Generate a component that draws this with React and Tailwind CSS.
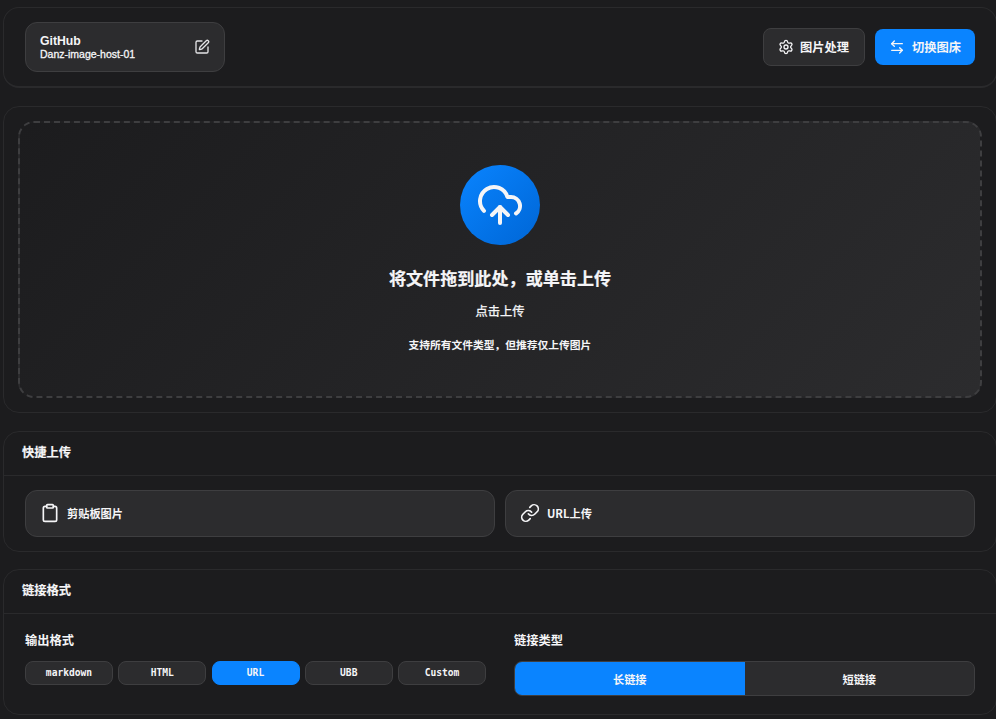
import { ArrowLeftRight, Clipboard, CloudUpload, Link, Settings, SquarePen } from "lucide-react";

const formats = ["markdown", "HTML", "URL", "UBB", "Custom"];

function Card({ className, children }) {
  return (
    <section className={`rounded-[16px] border border-[#2a2a2c] bg-[#1c1c1e] ${className}`}>{children}</section>
  );
}

function CardTitle({ children }) {
  return (
    <h2 className="flex h-[44px] items-center border-b border-[#2a2a2c] px-[18px] text-[12.25px] font-bold [-webkit-text-stroke:0.2px]">
      {children}
    </h2>
  );
}

function QuickButton({ icon: Icon, label }) {
  return (
    <button className="flex h-[47px] flex-1 items-center gap-[7px] rounded-[12px] border border-[#3e3e40] bg-[#2c2c2e] px-[14px] text-[11.2px] font-bold">
      <Icon size={20} className="mb-[2px]" />
      <span>{label}</span>
    </button>
  );
}

export default function App() {
  return (
    <div className="h-[719px] w-full overflow-hidden bg-[#1c1c1e] pl-[3px] pt-[7px] font-['Liberation_Sans','Noto_Sans_CJK_SC',sans-serif] text-[#f5f5f7]">
      <div className="flex w-[994px] flex-col">
        <Card className="mb-[18px] flex h-[81px] items-center justify-between border-b-2 px-[21px]">
          <button className="flex h-[50px] w-[200px] items-center justify-between rounded-[12px] border border-[#3e3e40] bg-[#2c2c2e] px-[14px] text-left">
            <span className="flex flex-col">
              <span className="text-[12.25px] font-bold leading-[14px]">GitHub</span>
              <span className="text-[10.5px] leading-[13px] [-webkit-text-stroke:0.3px]">Danz-image-host-01</span>
            </span>
            <SquarePen size={16} className="text-[#e4e4e6]" />
          </button>
          <div className="flex items-center gap-[10px]">
            <button className="flex h-[38px] w-[102px] items-center justify-center gap-[6px] rounded-[8px] border border-[#3e3e40] bg-[#2c2c2e] pr-px text-[12.25px] font-bold">
              <Settings size={16} />
              <span className="pt-[2px]">图片处理</span>
            </button>
            <button className="flex h-[36px] w-[100px] items-center justify-center gap-[7px] rounded-[8px] bg-[#0a84ff] text-[12.25px] font-bold">
              <ArrowLeftRight size={16} />
              <span className="pt-[2px]">切换图床</span>
            </button>
          </div>
        </Card>

        <Card className="mb-[18px] h-[307px] p-[14px]">
          <div className="flex h-full flex-col items-center rounded-[16px] border-2 border-dashed border-[#3e3e40] bg-linear-135 from-[#1c1c1e] to-[#2c2c2e] pt-[42px]">
            <div className="flex size-[80px] items-center justify-center rounded-full bg-linear-135 from-[#0a84ff] to-[#0066d6]">
              <CloudUpload size={48} />
            </div>
            <h1 className="mt-[22px] text-[17.1px] font-bold leading-[26px] [-webkit-text-stroke:0.2px]">
              将文件拖到此处，或单击上传
            </h1>
            <p className="mt-[10px] text-[12.25px] leading-[18px] [-webkit-text-stroke:0.3px]">点击上传</p>
            <p className="mt-[16px] text-[10.75px] font-bold leading-[16px]">支持所有文件类型，但推荐仅上传图片</p>
          </div>
        </Card>

        <Card className="mb-[17px] h-[121px]">
          <CardTitle>快捷上传</CardTitle>
          <div className="flex gap-[10px] px-[21px] pt-[14px] font-['Noto_Sans_CJK_SC',sans-serif]">
            <QuickButton icon={Clipboard} label="剪贴板图片" />
            <QuickButton icon={Link} label="URL上传" />
          </div>
        </Card>

        <Card className="h-[146px]">
          <CardTitle>链接格式</CardTitle>
          <div className="grid grid-cols-2 gap-[28px] px-[21px] pt-[18px]">
            <div>
              <h3 className="mb-[11px] text-[12.25px] font-bold leading-[18px]">输出格式</h3>
              <div className="grid grid-cols-5 gap-[5.25px]">
                {formats.map((name) => (
                  <button
                    key={name}
                    className={`h-[24px] rounded-[8px] border font-['DejaVu_Sans_Mono',monospace] text-[9.625px] font-bold ${
                      name === "URL" ? "border-[#0a84ff] bg-[#0a84ff]" : "border-[#3e3e40] bg-[#2c2c2e]"
                    }`}
                  >
                    {name}
                  </button>
                ))}
              </div>
            </div>
            <div>
              <h3 className="mb-[11px] text-[12.25px] font-bold leading-[18px]">链接类型</h3>
              <div className="flex h-[35px] overflow-hidden rounded-[8px] border border-[#3e3e40] bg-[#2c2c2e] text-[11.2px] font-bold">
                <button className="flex-1 bg-[#0a84ff] pt-[3px]">长链接</button>
                <button className="flex-1 pt-[3px]">短链接</button>
              </div>
            </div>
          </div>
        </Card>
      </div>
    </div>
  );
}
